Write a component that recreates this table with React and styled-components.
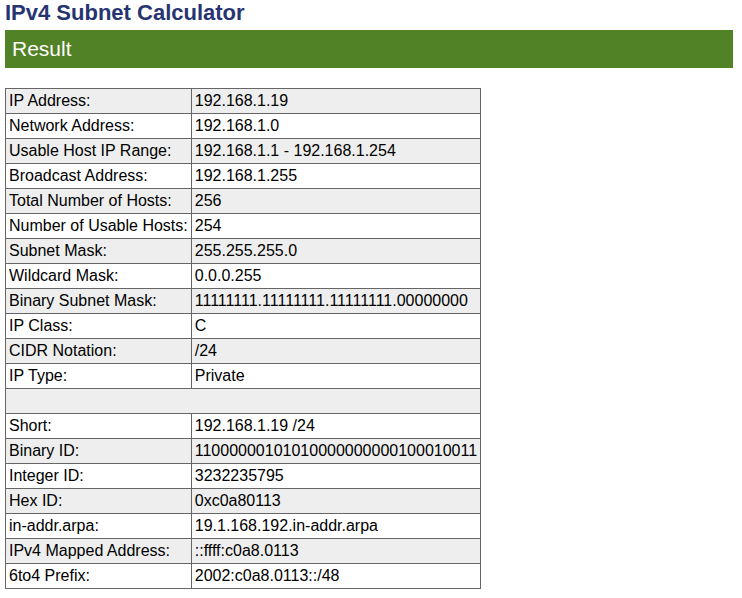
import React from "react";
import styled, { createGlobalStyle } from "styled-components";

const Global = createGlobalStyle`
  html, body { margin: 0; padding: 0; background: #fff; }
  body { font-family: "Liberation Sans", Arial, sans-serif; color: #000; }
`;

const Page = styled.div`
  width: 728px;
  margin-left: 5px;
`;

const Title = styled.h1`
  margin: 0;
  font-size: 22px;
  line-height: 26px;
  font-weight: bold;
  color: #263471;
`;

const ResultBar = styled.h2`
  margin: 4px 0 20px 0;
  padding: 7px 7px;
  background: #518225;
  color: #fff;
  font-size: 21px;
  font-weight: normal;
  line-height: 24px;
`;

const InfoTable = styled.table`
  border-collapse: collapse;
  font-size: 16px;
`;

const Row = styled.tr`
  background: ${(p) => (p.$shaded ? "#eeeeee" : "#ffffff")};
`;

const Cell = styled.td`
  border: 1px solid #666;
  padding: 3px 3px 3px 3px;
  line-height: 18px;
  height: 18px;
  white-space: nowrap;
`;

const rows = [
  ["IP Address:", "192.168.1.19"],
  ["Network Address:", "192.168.1.0"],
  ["Usable Host IP Range:", "192.168.1.1 - 192.168.1.254"],
  ["Broadcast Address:", "192.168.1.255"],
  ["Total Number of Hosts:", "256"],
  ["Number of Usable Hosts:", "254"],
  ["Subnet Mask:", "255.255.255.0"],
  ["Wildcard Mask:", "0.0.0.255"],
  ["Binary Subnet Mask:", "11111111.11111111.11111111.00000000"],
  ["IP Class:", "C"],
  ["CIDR Notation:", "/24"],
  ["IP Type:", "Private"],
  null,
  ["Short:", "192.168.1.19 /24"],
  ["Binary ID:", "11000000101010000000000100010011"],
  ["Integer ID:", "3232235795"],
  ["Hex ID:", "0xc0a80113"],
  ["in-addr.arpa:", "19.1.168.192.in-addr.arpa"],
  ["IPv4 Mapped Address:", "::ffff:c0a8.0113"],
  ["6to4 Prefix:", "2002:c0a8.0113::/48"],
];

export default function App() {
  return (
    <>
      <Global />
      <Page>
        <Title>IPv4 Subnet Calculator</Title>
        <ResultBar>Result</ResultBar>
        <InfoTable>
          <tbody>
            {rows.map((r, i) =>
              r ? (
                <Row key={i} $shaded={i % 2 === 0}>
                  <Cell>{r[0]}</Cell>
                  <Cell>{r[1]}</Cell>
                </Row>
              ) : (
                <Row key={i} $shaded={i % 2 === 0}>
                  <Cell colSpan={2}>&nbsp;</Cell>
                </Row>
              )
            )}
          </tbody>
        </InfoTable>
      </Page>
    </>
  );
}
